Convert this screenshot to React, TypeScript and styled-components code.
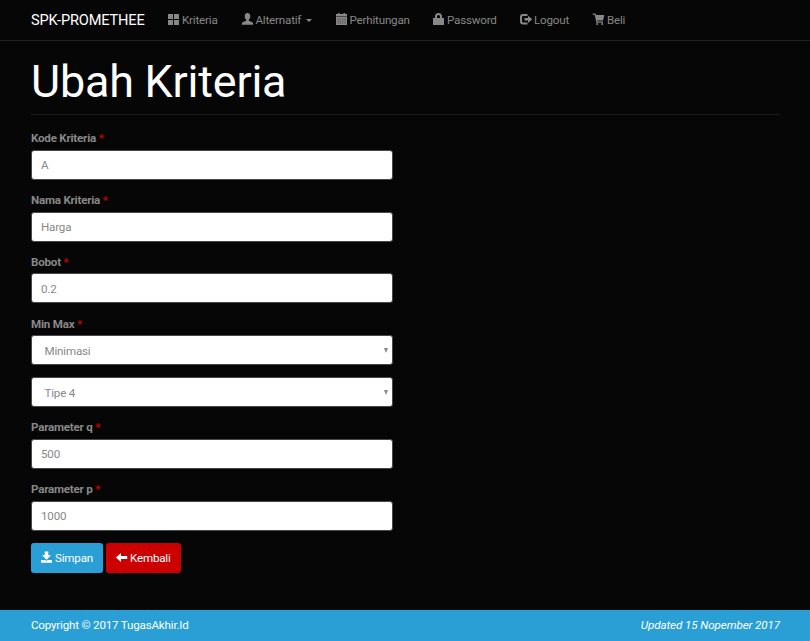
import React from "react";
import styled, { createGlobalStyle } from "styled-components";

const GlobalStyle = createGlobalStyle`
  * { box-sizing: border-box; }
  body {
    margin: 0;
    background: #060606;
    color: #888;
    font-family: Roboto, "Liberation Sans", sans-serif;
    font-size: 11.6px;
    letter-spacing: -0.19px;
    line-height: 16px;
  }
`;

const Page = styled.div`
  display: flex;
  flex-direction: column;
  height: 641px;
  overflow: hidden;
`;

const Navbar = styled.nav`
  display: flex;
  align-items: center;
  flex: none;
  height: 41px;
  padding: 0 30px 1px 31px;
  border-bottom: 1px solid #222;
  white-space: nowrap;
`;

const Brand = styled.a`
  width: 137px;
  flex: none;
  color: #fff;
  font-size: 14.6px;
  letter-spacing: -0.17px;
`;

const NavLink = styled.a<{ $width: number }>`
  display: flex;
  align-items: center;
  flex: none;
  gap: 3px;
  width: ${(p) => p.$width}px;
`;

const Caret = styled.span`
  margin: 2px 0 0 2px;
  border: 3px solid transparent;
  border-top-color: currentColor;
  border-bottom: 0;
`;

const Glyph = styled.svg`
  flex: none;
  width: 11px;
  height: 12px;
  margin-bottom: 1px;
  fill: currentColor;
`;

const Main = styled.main`
  flex: 1;
  padding: 0 30px 0 31px;
`;

const Title = styled.h1`
  margin: 0 0 15.5px;
  height: 73.5px;
  padding-top: 16px;
  border-bottom: 1px solid #1c1c1c;
  color: #fff;
  font-size: 44.9px;
  letter-spacing: -0.2px;
  font-weight: 400;
  line-height: 49px;
`;

const Form = styled.form`
  width: 362px;
`;

const Field = styled.div`
  margin-bottom: 12px;
`;

const Label = styled.label`
  display: block;
  height: 19.75px;
  padding-top: 0.4px;
  font-weight: 700;
  letter-spacing: -0.22px;
`;

const Required = styled.span`
  color: #c00;
`;

const Input = styled.input`
  display: block;
  width: 100%;
  height: 30px;
  padding: 1px 9px 0;
  border: 1px solid #484848;
  border-radius: 3px;
  background: #fff;
  color: #888;
  font: inherit;
  letter-spacing: inherit;
`;

const SelectBox = styled.div`
  display: flex;
  align-items: center;
  justify-content: space-between;
  height: 30px;
  padding: 1px 4.5px 0 12.5px;
  border: 1px solid #484848;
  border-radius: 3px;
  background: #fff;
`;

const Arrow = styled.span`
  border: 2.5px solid transparent;
  border-top: 5px solid #888;
  border-bottom: 0;
`;

const Actions = styled.div`
  display: flex;
  gap: 2.6px;
`;

const Button = styled.button<{ $color: string; $width: number }>`
  display: flex;
  align-items: center;
  justify-content: center;
  gap: 3px;
  width: ${(p) => p.$width}px;
  height: 30.5px;
  padding: 0;
  border: 0;
  border-radius: 3px;
  background: ${(p) => p.$color};
  color: #fff;
  font: inherit;
  letter-spacing: inherit;
  white-space: nowrap;
`;

const Footer = styled.footer`
  display: flex;
  align-items: center;
  justify-content: space-between;
  flex: none;
  height: 31.3px;
  padding: 0 30px 0 31px;
  background: #2a9fd6;
  color: #fff;
`;

const Updated = styled.em`
  letter-spacing: -0.08px;
`;

const icons = {
  grid: <path d="M0 1h5v5H0zM6 1h5v5H6zM0 7h5v5H0zM6 7h5v5H6z" />,
  user: <path d="M5.5 0C3.600 0 2.700 1.400 2.700 3.200c0 1.500.6 2.800 1.500 3.500v1.100C3 8.500.3 9 0 10L-.2 11.800h11.400L11 10C10.700 9 8 8.500 6.800 7.800V6.700C7.700 6 8.300 4.700 8.300 3.200 8.300 1.400 7.400 0 5.500 0z" />,
  calendar: (
    <>
      <path d="M0 1h2V0h1.500v1h4V0H9v1h2v2.500H0z" />
      <path d="M0 4h11v8H0z" />
      <path d="M1.200 6h8.600M1.200 8h8.600M1.200 10h8.600" fill="none" stroke="#060606" strokeOpacity=".55" strokeWidth=".8" strokeDasharray="1.500 .85" />
    </>
  ),
  lock: <path fillRule="evenodd" d="M2 5V3.500a3.500 3.500 0 0 1 7 0V5h2v7H0V5zM4 5h3V3.500a1.500 1.500 0 0 0-3 0z" />,
  logout: (
    <>
      <path d="M7.500 1H3a3 3 0 0 0-3 3v4.500a3 3 0 0 0 3 3h4.500V9.500H3.200A1.200 1.200 0 0 1 2 8.300V4.200A1.200 1.200 0 0 1 3.200 3h4.300z" />
      <path d="M4.500 5h3.500V2.700L12.300 6.300 8 9.900V7.600H4.500z" />
    </>
  ),
  cart: (
    <>
      <path d="M-.3.500h2.800L3 2h8.300L10 7.500H4.200l.2 1H10v1.200H3.400L1.700 1.800h-2z" />
      <circle cx="4.200" cy="10.900" r="1" />
      <circle cx="9.200" cy="10.900" r="1" />
    </>
  ),
  save: <path d="M3.700.5h3.600v3.700h2.700L5.500 8.700 1 4.200h2.700zM0 9h4.300l1.200 1.100L6.700 9H11v2.800H0z" />,
  back: <path d="M-.2 6.500L5 2v3h6.200v3H5v3z" />,
};

type IconName = keyof typeof icons;

const Icon = ({ name }: { name: IconName }) => (
  <Glyph viewBox="0 0 11 12" overflow="visible" aria-hidden="true">{icons[name]}</Glyph>
);

const links: { icon: IconName; text: string; width: number; menu?: boolean }[] = [
  { icon: "grid", text: "Kriteria", width: 73.5 },
  { icon: "user", text: "Alternatif", width: 94, menu: true },
  { icon: "calendar", text: "Perhitungan", width: 97.5 },
  { icon: "lock", text: "Password", width: 87 },
  { icon: "logout", text: "Logout", width: 73 },
  { icon: "cart", text: "Beli", width: 40 },
];

const TextField = ({ label, value }: { label: string; value: string }) => (
  <Field>
    <Label>{label} <Required>*</Required></Label>
    <Input defaultValue={value} />
  </Field>
);

export default function App() {
  return (
    <Page>
      <GlobalStyle />
      <Navbar>
        <Brand>SPK-PROMETHEE</Brand>
        {links.map((l) => (
          <NavLink key={l.text} $width={l.width}>
            <Icon name={l.icon} />
            <span>{l.text}</span>
            {l.menu && <Caret />}
          </NavLink>
        ))}
      </Navbar>
      <Main>
        <Title>Ubah Kriteria</Title>
        <Form>
          <TextField label="Kode Kriteria" value="A" />
          <TextField label="Nama Kriteria" value="Harga" />
          <TextField label="Bobot" value="0.2" />
          <Field>
            <Label>Min Max <Required>*</Required></Label>
            <SelectBox>Minimasi<Arrow /></SelectBox>
          </Field>
          <Field>
            <SelectBox>Tipe 4<Arrow /></SelectBox>
          </Field>
          <TextField label="Parameter q" value="500" />
          <TextField label="Parameter p" value="1000" />
          <Actions>
            <Button type="button" $color="#2a9fd6" $width={72}><Icon name="save" />Simpan</Button>
            <Button type="button" $color="#c00" $width={75.5}><Icon name="back" />Kembali</Button>
          </Actions>
        </Form>
      </Main>
      <Footer>
        <span>Copyright © 2017 TugasAkhir.Id</span>
        <Updated>Updated 15 Nopember 2017</Updated>
      </Footer>
    </Page>
  );
}
